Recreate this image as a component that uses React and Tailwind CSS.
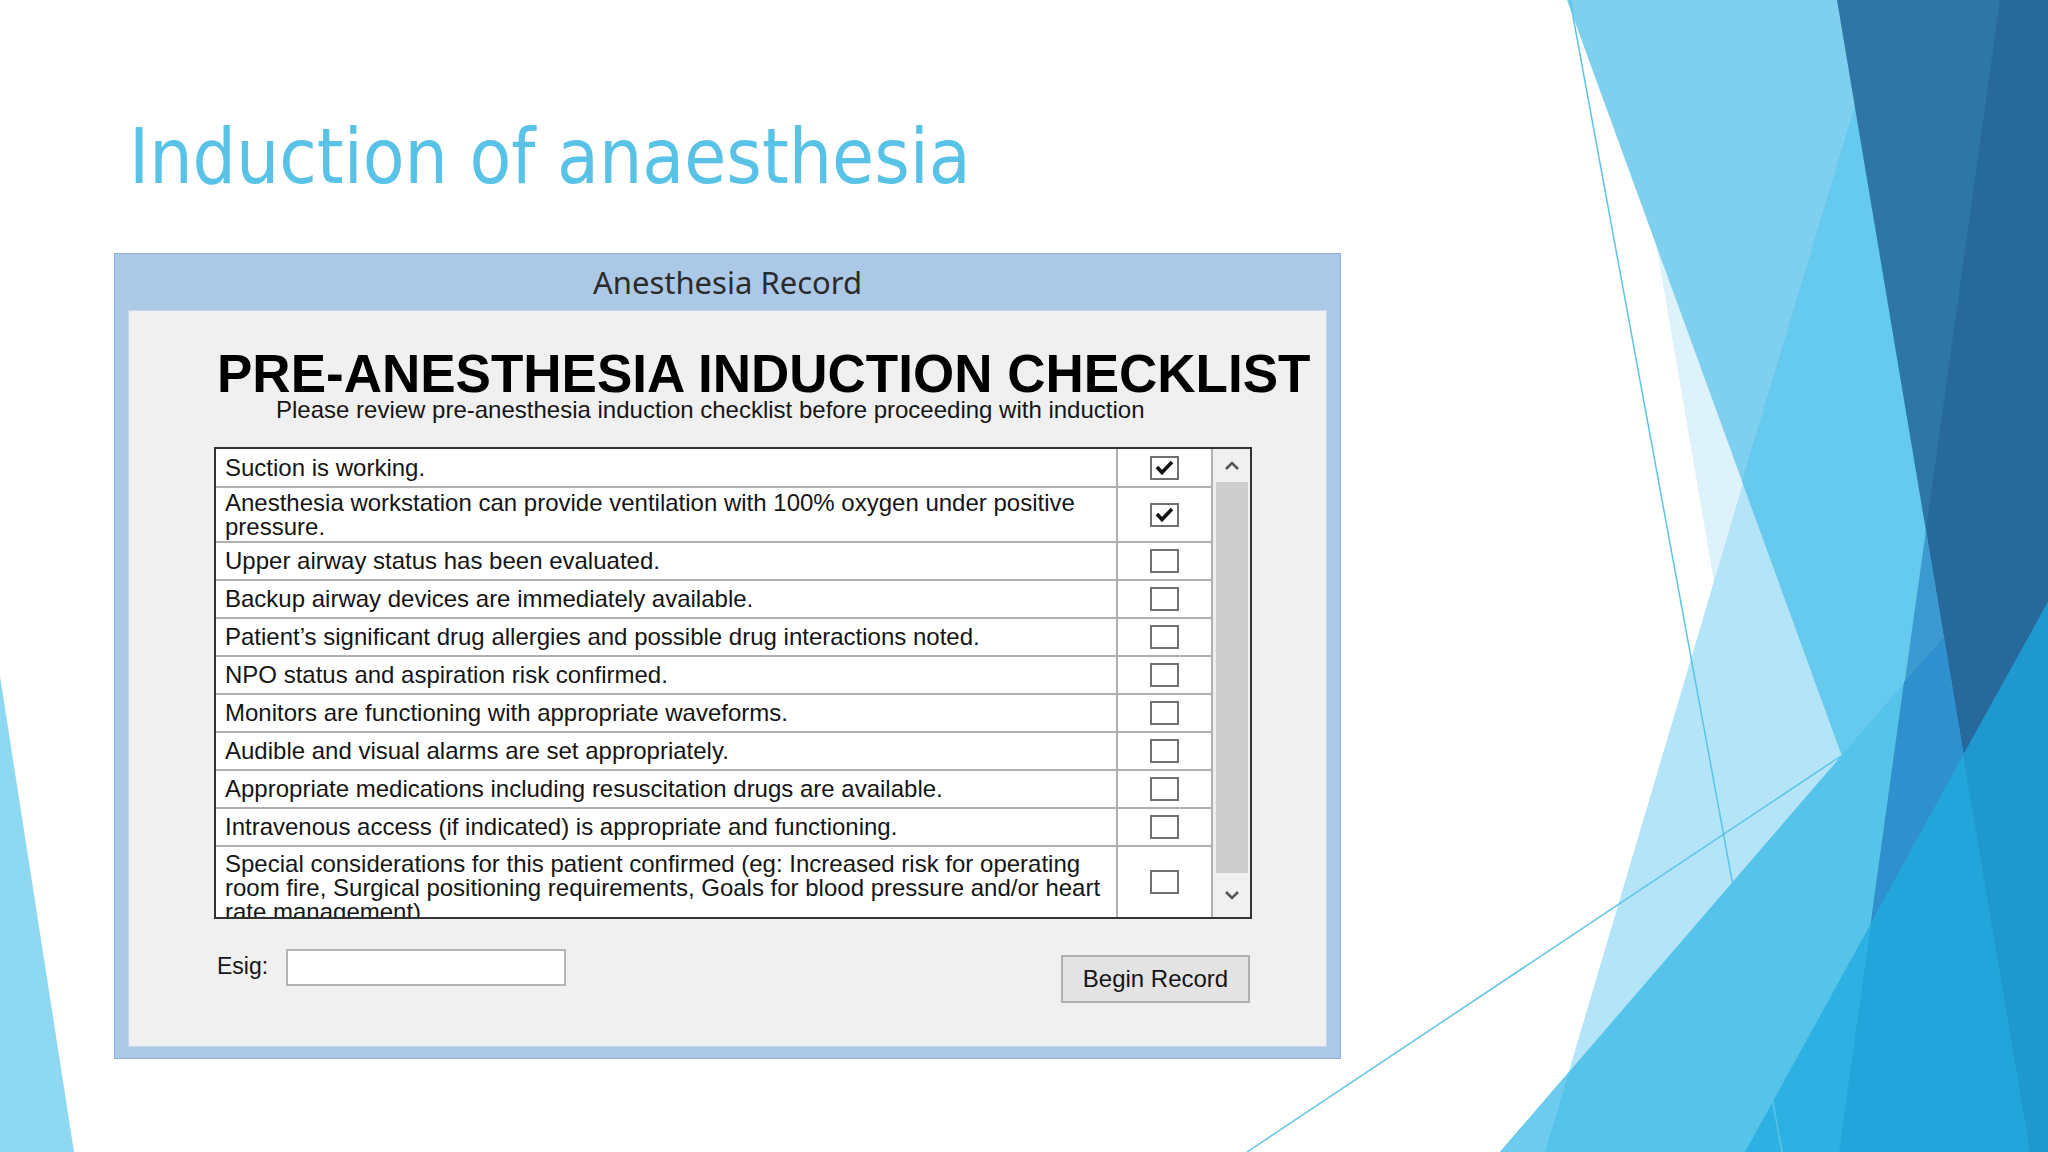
import React from 'react'

const ROWS = [
  { text: 'Suction is working.', checked: true, h: 'h-[39px]' },
  { text: 'Anesthesia workstation can provide ventilation with 100% oxygen under positive pressure.', checked: true, h: 'h-[55px]' },
  { text: 'Upper airway status has been evaluated.', h: 'h-[38px]' },
  { text: 'Backup airway devices are immediately available.', h: 'h-[38px]' },
  { text: 'Patient\u2019s significant drug allergies and possible drug interactions noted.', h: 'h-[38px]' },
  { text: 'NPO status and aspiration risk confirmed.', h: 'h-[38px]' },
  { text: 'Monitors are functioning with appropriate waveforms.', h: 'h-[38px]' },
  { text: 'Audible and visual alarms are set appropriately.', h: 'h-[38px]' },
  { text: 'Appropriate medications including resuscitation drugs are available.', h: 'h-[38px]' },
  { text: 'Intravenous access (if indicated) is appropriate and functioning.', h: 'h-[38px]' },
]

const LAST = 'Special considerations for this patient confirmed (eg: Increased risk for operating room fire, Surgical positioning requirements, Goals for blood pressure and/or heart rate management)'

// slide theme shapes, drawn in page pixels
const SHAPES = [
  ['0,676 74,1152 0,1152', '#8fd8f1'],
  ['1652,220 1760,850 2000,850 2000,220', '#ddf2fb'],
  ['1855,105 1545,1152 2048,1152 2048,105', '#b4e4f8'],
  ['1567,0 2048,0 2048,1152 1986,1152', '#7fd0ee'],
  ['1855,105 1742,481 1986,1152 2048,1152 2048,105', '#66c9ee'],
  ['1500,1152 2048,516 2048,1152', '#56c3ea'],
  ['1500,1152 1569,1072 1545,1152', '#6ccbee'],
  ['1837,0 2048,0 2048,1152 2030,1152', '#2e76a6'],
  ['2000,0 2048,0 2048,1152 2030,1152 1926,530', '#28699b'],
  ['1926,530 2030,1152 1839,1152', '#3c9ad0'],
  ['1904,682 1944,637 2030,1152 1839,1152', '#2e90cc'],
  ['1745,1152 2048,602 2048,1152', '#2cb1e2'],
  ['1871,924 1963,755 2030,1152 1839,1152', '#21a5db'],
  ['1963,755 2048,602 2048,1152 2030,1152', '#1e98cf'],
]

function Backdrop() {
  return (
    <svg className="absolute inset-0" width="2048" height="1152" viewBox="0 0 2048 1152">
      {SHAPES.map(([pts, fill]) => (
        <polygon key={pts} points={pts} fill={fill} />
      ))}
      <line x1="1570" y1="0" x2="1782" y2="1152" stroke="#5bc3e6" strokeWidth="1.5" />
      <line x1="1247" y1="1152" x2="1841" y2="756" stroke="#5bc3e6" strokeWidth="1.5" />
    </svg>
  )
}

function Box({ checked }) {
  return (
    <div className="w-[29px] h-[24px] border-2 border-[#707070] bg-white flex items-center justify-center">
      {checked && (
        <svg width="19" height="15" viewBox="0 0 19 15">
          <path d="M2 7 L7 12.5 L17 2" fill="none" stroke="#111" strokeWidth="3.6" />
        </svg>
      )}
    </div>
  )
}

function Chevron({ down }) {
  return (
    <svg width="16" height="10" viewBox="0 0 16 10">
      <path d={down ? 'M2 2 L8 8 L14 2' : 'M2 8 L8 2 L14 8'} fill="none" stroke="#555" strokeWidth="2.5" />
    </svg>
  )
}

export default function App() {
  return (
    <div className="relative w-[2048px] h-[1152px] overflow-hidden bg-white">
      <Backdrop />

      <div className="relative pl-[114px] pt-[119px]">
        <h1 className="ml-[15px] text-[76px] leading-none text-[#59c2e7] font-stretch-condensed font-['DejaVu_Sans',sans-serif]">
          Induction of anaesthesia
        </h1>

        {/* window */}
        <div className="mt-[58px] w-[1227px] h-[806px] border border-[#8fb0d5] bg-[#abc8e7] flex flex-col">
          <div className="h-[56px] flex items-center justify-center text-[31px] text-[#2b2b2b] font-['Noto_Sans',sans-serif]">
            Anesthesia Record
          </div>

          <div className="ml-[13px] w-[1199px] h-[737px] border border-[#c6d7eb] bg-[#f0f0f0] flex flex-col font-['Liberation_Sans',Arial,sans-serif] text-[#151515]">
            <h2 className="ml-[88px] mt-[36px] text-[53px] leading-none font-bold text-black whitespace-nowrap">
              PRE-ANESTHESIA INDUCTION CHECKLIST
            </h2>
            <p className="ml-[147px] text-[24px] leading-[20px] whitespace-nowrap">
              Please review pre-anesthesia induction checklist before proceeding with induction
            </p>

            {/* checklist grid */}
            <div className="ml-[85px] mt-[27px] w-[1038px] h-[472px] border-2 border-[#333] bg-white flex">
              <div className="w-[995px] flex flex-col">
                {ROWS.map(r => (
                  <div key={r.text} className={`${r.h} flex border-b-2 border-[#b0b0b0]`}>
                    <div className="w-[902px] border-r-2 border-[#b0b0b0] pl-[9px] pr-[12px] flex items-center text-[24px] leading-[24px]">
                      {r.text}
                    </div>
                    <div className="flex-1 flex items-center justify-center">
                      <Box checked={r.checked} />
                    </div>
                  </div>
                ))}
                <div className="flex-1 flex overflow-hidden">
                  <div className="w-[902px] border-r-2 border-[#b0b0b0] pl-[9px] pr-[12px] pt-[5px] text-[24px] leading-[24px] overflow-hidden">
                    {LAST}
                  </div>
                  <div className="flex-1 flex items-center justify-center">
                    <Box />
                  </div>
                </div>
              </div>

              {/* scrollbar */}
              <div className="flex-1 border-l-2 border-[#b0b0b0] bg-[#f0f0f0] flex flex-col items-center">
                <div className="h-[33px] flex items-center justify-center">
                  <Chevron />
                </div>
                <div className="w-[32px] h-[391px] bg-[#cdcdcd]" />
                <div className="flex-1 flex items-center justify-center">
                  <Chevron down />
                </div>
              </div>
            </div>

            {/* signature + action */}
            <div className="ml-[85px] mt-[30px] w-[1038px] flex items-start">
              <div className="w-[72px] pl-[3px] mt-[4px] text-[23px] leading-[26px]">Esig:</div>
              <div className="w-[280px] h-[37px] border-2 border-[#b4b4b4] bg-white" />
              <button className="ml-auto mr-[2px] mt-[6px] w-[189px] h-[48px] border-2 border-[#b0b0b0] bg-[#e3e3e3] text-[24px] leading-none text-[#151515]">
                Begin Record
              </button>
            </div>
          </div>
        </div>
      </div>
    </div>
  )
}
